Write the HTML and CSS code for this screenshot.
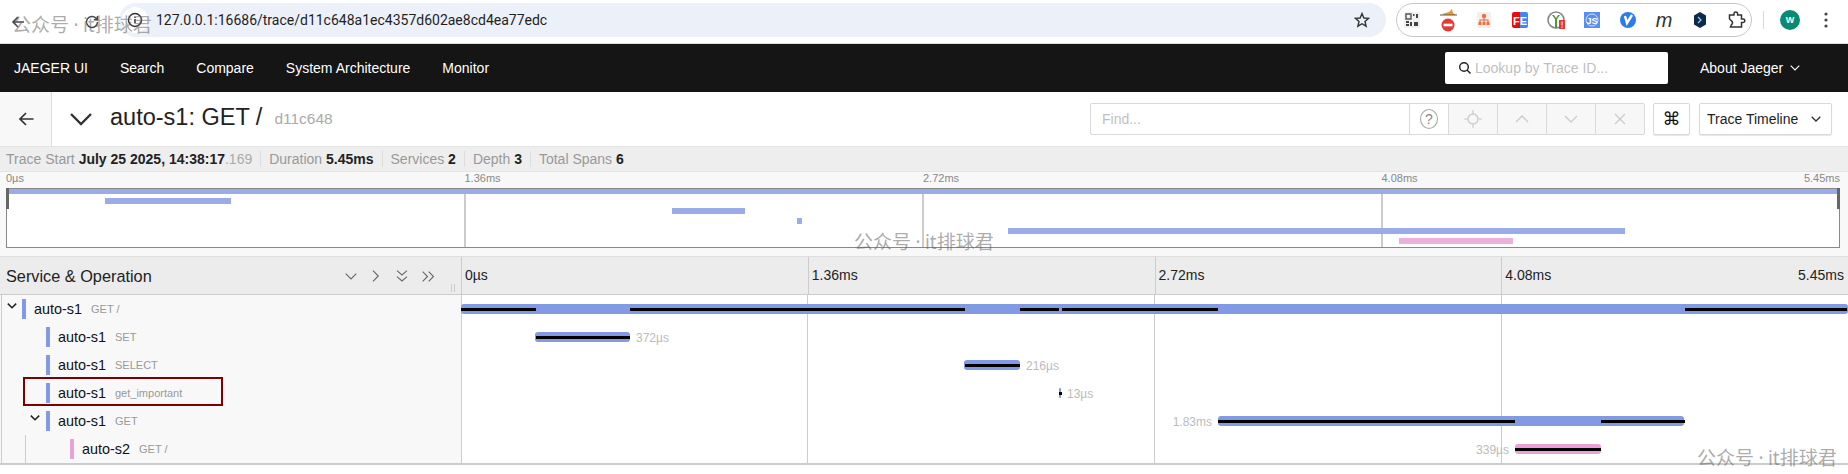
FILE: index.html
```html
<!DOCTYPE HTML>
<html>
<head>
	<meta charset="utf-8"/>
	<title>auto-s1: GET / - Jaeger UI</title>
	<link rel="stylesheet" href="styles.css">
</head>
<body>
	<div class="toolbar">
		<div class="tool-nav">
			<svg class="tool-back" width="16" height="16" viewBox="0 0 16 16"><path d="M14 8H3M8 3L3 8l5 5" fill="none" stroke="#474747" stroke-width="1.6"/></svg>
			<svg class="tool-reload" width="16" height="16" viewBox="0 0 16 16"><path d="M13.5 8a5.5 5.5 0 1 1-1.6-3.9L13.5 5.7M13.5 2v3.7H9.8" fill="none" stroke="#474747" stroke-width="1.5"/></svg>
		</div>
		<div class="omnibox">
			<span class="site-chip"><svg width="16" height="16" viewBox="0 0 16 16"><circle cx="8" cy="8" r="6.5" fill="none" stroke="#333" stroke-width="1.4"/><path d="M8 7v4.4M8 4.4v1.5" stroke="#333" stroke-width="1.5"/></svg></span>
			<span class="url">127.0.0.1:16686/trace/d11c648a1ec4357d602ae8cd4ea77edc</span>
			<svg class="star" width="16" height="16" viewBox="0 0 16 16"><path d="M8 1.6l1.9 4.4 4.7.4-3.6 3.1 1.1 4.7L8 11.7l-4.1 2.5L5 9.5 1.4 6.4l4.7-.4z" fill="none" stroke="#333" stroke-width="1.4"/></svg>
		</div>
		<div class="ext-pill">
			<svg class="ext" width="20" height="20" viewBox="0 0 20 20"><rect x="2" y="2" width="16" height="16" rx="2" fill="#f0f0f0"/><path d="M4 4h5v5H4z" fill="none" stroke="#555" stroke-width="1.4"/><path d="M11 4h1.500v2H11zM14 4h2v4h-2zM4 11h3v2H4zM8 12h2v4H8zM4 14h3v2H4zM12 12h4v4h-4z" fill="#444"/></svg>
			<svg class="ext" width="20" height="30" viewBox="0 0 20 30"><path d="M4 9l7-2 3-3 1 4 3 2H7z" fill="#e8972b"/><path d="M2 10h17" stroke="#555"/><circle cx="10" cy="20" r="6.500" fill="#e53935"/><rect x="5.500" y="18.700" width="9" height="2.600" fill="#fff"/></svg>
			<svg class="ext" width="20" height="20" viewBox="0 0 20 20"><rect x="3" y="2" width="14" height="16" rx="2" fill="#f5efec"/><circle cx="10" cy="6" r="2.200" fill="#ec6f45"/><path d="M6 12v-2h8v2M10 8v4" fill="none" stroke="#ec6f45" stroke-width="1.200"/><path d="M4.500 12h3v3h-3zM8.500 12h3v3h-3zM12.500 12h3v3h-3z" fill="#ec6f45"/></svg>
			<svg class="ext" width="20" height="20" viewBox="0 0 20 20"><path d="M4 2h6v16H4a2 2 0 0 1-2-2V4a2 2 0 0 1 2-2z" fill="#ee0a0a"/><path d="M10 2h6a2 2 0 0 1 2 2v12a2 2 0 0 1-2 2h-6z" fill="#4285f4"/><text class="ext-fe" x="10" y="14.5" text-anchor="middle">FE</text></svg>
			<svg class="ext" width="20" height="20" viewBox="0 0 20 20"><circle cx="10" cy="10" r="8" fill="#fff" stroke="#888" stroke-width="1.6"/><path d="M9 18V9L6 5h2l2 3 2-3h2l-3 4v9z" fill="#4a9a3c"/><rect x="13" y="10" width="6" height="9" fill="#e53935"/><path d="M16 11.5v4M16 16.5v1.2" stroke="#fff"/></svg>
			<svg class="ext" width="20" height="20" viewBox="0 0 20 20"><rect x="2" y="2" width="16" height="16" fill="#5b8def"/><circle cx="10" cy="10" r="6" fill="none" stroke="#cfe0fb"/><text class="ext-js" x="10" y="13.500" text-anchor="middle">JS</text></svg>
			<svg class="ext" width="20" height="20" viewBox="0 0 20 20"><circle cx="10" cy="10" r="8" fill="#2b7de9"/><path d="M7 6l2 7 5-8" fill="none" stroke="#fff" stroke-width="2.4"/></svg>
			<span class="ext ext-m">m</span>
			<svg class="ext" width="20" height="20" viewBox="0 0 20 20"><path d="M10 2l6 3.5v9L10 18l-6-3.500v-9z" fill="#0d2a4a"/><path d="M8 7l3 3-3 3" fill="none" stroke="#9fc3e8" stroke-width="1.3"/></svg>
			<svg class="ext" width="20" height="20" viewBox="0 0 20 20"><path d="M3.500 5H8V3.700a1.800 1.800 0 0 1 3.600 0V5h3.900v4H17a1.500 1.500 0 0 1 0 3.600h-1.500V17h-11l1-2.500a2 2 0 0 0 0-3.500L3.500 9z" fill="none" stroke="#333" stroke-width="1.500"/></svg>
		</div>
		<span class="tool-sep"></span>
		<span class="avatar">W</span>
		<svg class="dots" width="4" height="16" viewBox="0 0 4 16"><circle cx="2" cy="2" r="1.600" fill="#474747"/><circle cx="2" cy="8" r="1.600" fill="#474747"/><circle cx="2" cy="14" r="1.600" fill="#474747"/></svg>
	</div>

	<div class="topnav">
		<a class="nav-item">JAEGER UI</a>
		<a class="nav-item">Search</a>
		<a class="nav-item">Compare</a>
		<a class="nav-item">System Architecture</a>
		<a class="nav-item">Monitor</a>
		<div class="lookup">
			<svg width="14" height="14" viewBox="0 0 14 14"><circle cx="6" cy="6" r="4.300" fill="none" stroke="#222" stroke-width="1.400"/><path d="M9 9l3.500 3.500" stroke="#222" stroke-width="1.400"/></svg>
			<span>Lookup by Trace ID...</span>
		</div>
		<a class="about">About Jaeger<svg width="10" height="6" viewBox="0 0 10 6"><path d="M.7.7L5 5 9.300.7" fill="none" stroke="#fff" stroke-width="1.100"/></svg></a>
	</div>

	<div class="trace-head">
		<div class="back-col"><svg width="16" height="14" viewBox="0 0 16 14"><path d="M15.500 7H2M8 1L2 7l6 6" fill="none" stroke="#333" stroke-width="1.700"/></svg></div>
		<svg class="title-chev" width="22" height="13" viewBox="0 0 22 13"><path d="M1 1l10 10L21 1" fill="none" stroke="#333" stroke-width="2.400"/></svg>
		<h1 class="trace-title">auto-s1: GET /</h1>
		<span class="trace-id">d11c648</span>
		<div class="finder">
			<span class="find-input">Find...</span>
			<span class="find-cell help"><svg width="20" height="22" viewBox="0 0 20 22"><ellipse cx="10" cy="11" rx="8.500" ry="9.500" fill="none" stroke="#aaa" stroke-width="1.100"/><text class="help-q" x="10" y="16" text-anchor="middle">?</text></svg></span>
			<span class="find-cell off"><svg width="18" height="18" viewBox="0 0 18 18"><circle cx="9" cy="9" r="5" fill="none" stroke="#ccc" stroke-width="1.400"/><path d="M9 0v4M9 14v4M0 9h4M14 9h4" stroke="#ccc" stroke-width="1.200"/></svg></span>
			<span class="find-cell off"><svg width="14" height="8" viewBox="0 0 14 8"><path d="M1 7l6-6 6 6" fill="none" stroke="#ccc" stroke-width="1.400"/></svg></span>
			<span class="find-cell off"><svg width="14" height="8" viewBox="0 0 14 8"><path d="M1 1l6 6 6-6" fill="none" stroke="#ccc" stroke-width="1.400"/></svg></span>
			<span class="find-cell off"><svg width="12" height="12" viewBox="0 0 12 12"><path d="M1 1l10 10M11 1L1 11" stroke="#ccc" stroke-width="1.400"/></svg></span>
		</div>
		<span class="kbd-btn">⌘</span>
		<span class="view-select">Trace Timeline<svg width="10" height="6" viewBox="0 0 10 6"><path d="M.7.7L5 5 9.300.7" fill="none" stroke="#333" stroke-width="1.300"/></svg></span>
	</div>

	<div class="trace-info">
		<span class="info-item">Trace Start <b>July 25 2025, 14:38:17</b><i>.169</i></span>
		<span class="info-item">Duration <b>5.45ms</b></span>
		<span class="info-item">Services <b>2</b></span>
		<span class="info-item">Depth <b>3</b></span>
		<span class="info-item">Total Spans <b>6</b></span>
	</div>

	<div class="minimap">
		<div class="mini-ticks">
			<span>0µs</span><span>1.36ms</span><span>2.72ms</span><span>4.08ms</span><span class="last">5.45ms</span>
		</div>
		<div class="mini-canvas">
			<div class="mini-grid"><span></span><span></span><span></span><span></span></div>
			<div class="mini-bar root" style="top:0;left:0;width:1834px"></div>
			<div class="mini-bar" style="top:9px;left:99px;width:126px"></div>
			<div class="mini-bar" style="top:19px;left:666px;width:73px"></div>
			<div class="mini-bar" style="top:29px;left:791px;width:5px"></div>
			<div class="mini-bar" style="top:39px;left:1002px;width:617px"></div>
			<div class="mini-bar pink" style="top:49px;left:1393px;width:114px"></div>
			<div class="handle left"></div>
			<div class="handle right"></div>
		</div>
	</div>

	<div class="viewer">
		<div class="viewer-head">
			<div class="name-col head-name">
				<span class="head-title">Service &amp; Operation</span>
				<svg class="hico h1" width="12" height="7" viewBox="0 0 12 7"><path d="M.7.7L6 6 11.300.7" fill="none" stroke="#666" stroke-width="1.100"/></svg>
				<svg class="hico h2" width="8" height="12" viewBox="0 0 8 12"><path d="M1 .7L6.300 6 1 11.300" fill="none" stroke="#666" stroke-width="1.100"/></svg>
				<svg class="hico h3" width="12" height="12" viewBox="0 0 12 12"><path d="M1 .7L6 5 11 .7M1 6.700L6 11l5-4.300" fill="none" stroke="#666" stroke-width="1.100"/></svg>
				<svg class="hico h4" width="13" height="11" viewBox="0 0 13 11"><path d="M.7.7L5.500 5.500.7 10.300M6.700.7l4.800 4.800-4.800 4.800" fill="none" stroke="#666" stroke-width="1.100"/></svg>
				<span class="grip"></span>
			</div>
			<div class="time-col head-ticks">
				<span>0µs</span><span>1.36ms</span><span>2.72ms</span><span>4.08ms</span>
				<em>5.45ms</em>
			</div>
		</div>
		<div class="viewer-body">
			<div class="name-col tree">
				<div class="row">
					<span class="tog"><svg width="10" height="6" viewBox="0 0 10 6"><path d="M.8.600L5 4.800 9.200.600" fill="none" stroke="#222" stroke-width="1.500"/></svg></span>
					<span class="svc-bar"></span><span class="svc">auto-s1</span><span class="op">GET /</span>
				</div>
				<div class="row">
					<span class="guide"></span><span class="tog"></span>
					<span class="svc-bar"></span><span class="svc">auto-s1</span><span class="op">SET</span>
				</div>
				<div class="row">
					<span class="guide"></span><span class="tog"></span>
					<span class="svc-bar"></span><span class="svc">auto-s1</span><span class="op">SELECT</span>
				</div>
				<div class="row">
					<span class="guide"></span><span class="tog"></span>
					<span class="svc-bar"></span><span class="svc">auto-s1</span><span class="op">get_important</span>
				</div>
				<div class="row">
					<span class="guide"></span>
					<span class="tog"><svg width="10" height="6" viewBox="0 0 10 6"><path d="M.8.600L5 4.800 9.200.600" fill="none" stroke="#222" stroke-width="1.500"/></svg></span>
					<span class="svc-bar"></span><span class="svc">auto-s1</span><span class="op">GET</span>
				</div>
				<div class="row">
					<span class="guide"></span><span class="guide"></span><span class="tog"></span>
					<span class="svc-bar pink"></span><span class="svc">auto-s2</span><span class="op">GET /</span>
				</div>
				<div class="mark-box"></div>
			</div>
			<div class="time-col spans">
				<div class="time-grid"><span></span><span></span><span></span><span></span></div>
				<div class="span-row">
					<div class="span-bar" style="left:-1px;width:1387px"></div>
					<div class="self" style="left:-1px;width:75px"></div>
					<div class="self" style="left:168px;width:335px"></div>
					<div class="self" style="left:558px;width:39px"></div>
					<div class="self" style="left:600px;width:156px"></div>
					<div class="self" style="left:1223px;width:162px"></div>
				</div>
				<div class="span-row">
					<div class="span-bar" style="left:73px;width:95px"></div>
					<div class="self" style="left:74px;width:94px"></div>
					<span class="dur" style="left:174px">372µs</span>
				</div>
				<div class="span-row">
					<div class="span-bar" style="left:502px;width:56px"></div>
					<div class="self" style="left:503px;width:55px"></div>
					<span class="dur" style="left:564px">216µs</span>
				</div>
				<div class="span-row">
					<div class="span-bar" style="left:597px;width:2px"></div>
					<div class="self" style="left:597px;width:3px"></div>
					<span class="dur" style="left:605px">13µs</span>
				</div>
				<div class="span-row">
					<div class="span-bar" style="left:756px;width:466px"></div>
					<div class="self" style="left:756px;width:297px"></div>
					<div class="self" style="left:1139px;width:84px"></div>
					<span class="dur" style="right:636px">1.83ms</span>
				</div>
				<div class="span-row">
					<div class="span-bar pink" style="left:1053px;width:86px"></div>
					<div class="self" style="left:1053px;width:86px"></div>
					<span class="dur" style="right:339px">339µs</span>
				</div>
			</div>
		</div>
	</div>

	<div class="wm wm-top">公众号 · it排球君</div>
	<div class="wm wm-mid">公众号 · it排球君</div>
	<div class="wm wm-end">公众号 · it排球君</div>
</body>
</html>
```

FILE: styles.css
```css
html, body {
	margin: 0px;
	height: 100%;
	overflow: hidden;
	background-color: #fff;
}
body {
	font-family: "Liberation Sans", Arial, sans-serif;
	font-size: 14px;
	color: #222;
}
svg {
	display: block;
}

/* browser chrome */
.toolbar {
	display: flex;
	align-items: center;
	height: 43px;
	border-bottom: 1px solid #dadce0;
	box-sizing: content-box;
}
.tool-nav {
	display: flex;
	align-items: center;
	width: 119px;
	flex: none;
}
.tool-back {
	margin-left: 10px;
}
.tool-reload {
	margin-left: 58px;
}
.omnibox {
	display: flex;
	align-items: center;
	width: 1267px;
	height: 34px;
	margin-top: -3px;
	border-radius: 17px;
	background-color: #ecf0f9;
}
.site-chip {
	display: flex;
	align-items: center;
	justify-content: center;
	width: 26px;
	height: 26px;
	margin-left: 3px;
	border-radius: 50%;
	background-color: #fff;
}
.url {
	margin-left: 8px;
	font-family: Roboto, sans-serif;
	font-size: 14px;
	color: #1f1f1f;
	flex: 1;
}
.star {
	margin-right: 16px;
}
.ext-pill {
	display: flex;
	align-items: center;
	gap: 16px;
	width: 356px;
	height: 34px;
	margin-left: 10px;
	margin-top: -3px;
	padding-left: 5px;
	box-sizing: border-box;
	border: 1px solid #c7c7c7;
	border-radius: 17px;
}
.ext {
	flex: none;
	width: 20px;
}
.ext-fe {
	font-size: 11px;
	font-weight: bold;
	fill: #fff;
}
.ext-js {
	font-size: 9px;
	font-weight: bold;
	fill: #fff;
}
.ext-m {
	font-style: italic;
	font-size: 20px;
	line-height: 18px;
	text-align: center;
	color: #333;
}
.tool-sep {
	width: 1px;
	height: 18px;
	margin-left: 11px;
	margin-top: -3px;
	background-color: #c9daf3;
}
.avatar {
	width: 20px;
	height: 20px;
	margin-left: 16px;
	margin-top: -3px;
	border-radius: 50%;
	background-color: #0b8a73;
	color: #fff;
	font-size: 9px;
	font-weight: bold;
	line-height: 20px;
	text-align: center;
}
.dots {
	margin-left: 24px;
	margin-top: -3px;
}

/* jaeger nav */
.topnav {
	display: flex;
	align-items: center;
	height: 48px;
	background-color: #151515;
	color: #fff;
}
.nav-item {
	margin-left: 32px;
}
.nav-item:first-child {
	margin-left: 14px;
}
.lookup {
	display: flex;
	align-items: center;
	gap: 3px;
	width: 223px;
	height: 32px;
	margin-left: auto;
	padding-left: 13px;
	box-sizing: border-box;
	border-radius: 2px;
	background-color: #fff;
	color: #bfbfbf;
}
.about {
	display: flex;
	align-items: center;
	gap: 7px;
	width: 148px;
	margin-left: 32px;
}

/* trace header */
.trace-head {
	display: flex;
	align-items: center;
	height: 54px;
}
.back-col {
	display: flex;
	align-items: center;
	justify-content: center;
	align-self: stretch;
	width: 52px;
	box-sizing: border-box;
	border-right: 1px solid #ddd;
	background-color: #f8f8f8;
}
.title-chev {
	margin-left: 18px;
}
.trace-title {
	margin: -3px 0px 0px 18px;
	font-size: 23.5px;
	font-weight: normal;
	color: #222;
}
.trace-id {
	margin-left: 12px;
	font-size: 15.5px;
	color: #aaa;
}
.finder {
	display: flex;
	height: 32px;
	margin-left: auto;
	box-sizing: border-box;
	border: 1px solid #d9d9d9;
	border-radius: 2px;
}
.find-input {
	width: 318px;
	padding-left: 11px;
	box-sizing: border-box;
	line-height: 30px;
	color: #bfbfbf;
}
.find-cell {
	display: flex;
	align-items: center;
	justify-content: center;
	width: 49px;
	box-sizing: border-box;
	border-left: 1px solid #d9d9d9;
}
.find-cell.help {
	width: 39px;
}
.find-cell.off {
	background-color: #f7f7f7;
}
.help-q {
	font-size: 14px;
	fill: #888;
}
.kbd-btn {
	width: 37px;
	height: 32px;
	margin-left: 8px;
	box-sizing: border-box;
	border: 1px solid #d9d9d9;
	border-radius: 2px;
	box-shadow: 0px 1px 1px rgba(0, 0, 0, 0.1);
	font-family: "DejaVu Sans", sans-serif;
	font-size: 18px;
	line-height: 30px;
	text-align: center;
	color: #111;
}
.view-select {
	display: flex;
	align-items: center;
	justify-content: space-between;
	width: 133px;
	height: 32px;
	margin-left: 9px;
	margin-right: 16px;
	padding: 0px 10px 0px 7px;
	box-sizing: border-box;
	border: 1px solid #d9d9d9;
	border-radius: 2px;
	box-shadow: 0px 1px 1px rgba(0, 0, 0, 0.1);
}

/* info strip */
.trace-info {
	display: flex;
	align-items: center;
	height: 26px;
	padding-left: 6px;
	box-sizing: border-box;
	border-top: 1px solid #e4e4e4;
	border-bottom: 1px solid #e4e4e4;
	background-color: #eee;
	color: #999;
}
.info-item b {
	color: #222;
}
.info-item i {
	font-style: normal;
	color: #aaa;
}
.info-item + .info-item {
	margin-left: 8px;
	padding-left: 8px;
	border-left: 1px solid #ddd;
}

/* minimap */
.minimap {
	height: 84px;
	padding: 0px 8px 0px 6px;
	background-color: #f8f8f8;
}
.mini-ticks {
	display: grid;
	grid-template-columns: repeat(4, 1fr);
	position: relative;
	height: 16px;
	font-size: 11px;
	line-height: 13px;
	color: #888;
}
.mini-ticks .last {
	position: absolute;
	right: 0px;
}
.mini-canvas {
	position: relative;
	height: 60px;
	box-sizing: border-box;
	border: 1px solid #888;
	background-color: #fff;
}
.mini-grid {
	position: absolute;
	top: 0px;
	bottom: 0px;
	left: 0px;
	right: 0px;
	display: flex;
}
.mini-grid span {
	flex: 1;
	box-sizing: border-box;
	border-left: 2px solid #ccc;
}
.mini-grid span:first-child {
	border-left: none;
}
.mini-bar {
	position: absolute;
	height: 6px;
	margin-left: -1px;
	background-color: #9aabe8;
}
.mini-bar.root {
	height: 5px;
}
.mini-bar.pink {
	background-color: #ecb0dc;
}
.handle {
	position: absolute;
	top: -1px;
	width: 3px;
	height: 21px;
	background-color: #666;
}
.handle.left {
	left: -1px;
}
.handle.right {
	right: -1px;
}

/* span viewer */
.viewer {
	border-top: 1px solid #ddd;
	border-bottom: 2px solid #ccc;
}
.viewer-head {
	display: flex;
	height: 37px;
	box-sizing: content-box;
	border-bottom: 1px solid #ccc;
	background-color: #ececec;
}
.viewer-body {
	display: flex;
}
.name-col {
	position: relative;
	width: 462px;
	flex: none;
	box-sizing: border-box;
	border-right: 1px solid #ccc;
}
.time-col {
	position: relative;
	flex: 1;
}
.head-name {
	display: flex;
	align-items: center;
	padding-left: 6px;
}
.head-title {
	flex: 1;
	margin-top: 1px;
	font-size: 16.3px;
}
.hico {
	position: absolute;
}
.h1 { left: 345px; top: 16px; }
.h2 { left: 372px; top: 13px; }
.h3 { left: 396px; top: 13px; }
.h4 { left: 422px; top: 14px; }
.grip {
	position: absolute;
	left: 451px;
	top: 27px;
	width: 2px;
	height: 8px;
	border-left: 1px solid #ccc;
	border-right: 1px solid #ccc;
}
.head-ticks {
	display: flex;
	align-items: center;
	margin-left: -1px;
	line-height: 37px;
}
.head-ticks span {
	flex: 1;
	padding-left: 3px;
	box-sizing: border-box;
	border-left: 1px solid #ccc;
}
.head-ticks span:first-child {
	border-left-color: transparent;
}
.head-ticks em {
	position: absolute;
	right: 4px;
	font-style: normal;
}
.tree {
	background-color: #f8f8f8;
}
.row {
	display: flex;
	align-items: center;
	height: 28px;
	margin-left: 1px;
}
.guide {
	align-self: stretch;
	width: 24px;
	flex: none;
	box-sizing: border-box;
	border-left: 1px solid #ccc;
}
.tog {
	align-self: stretch;
	width: 21px;
	flex: none;
	box-sizing: border-box;
	padding: 8px 0px 0px 5px;
	border-left: 1px solid #ccc;
}
.row:nth-child(n+2) .guide + .tog {
	border-left: none;
	padding-left: 5px;
}
.svc-bar {
	width: 4px;
	height: 20px;
	flex: none;
	background-color: #8299e3;
}
.svc-bar.pink {
	background-color: #e8a2d6;
}
.svc {
	margin-left: 8px;
	margin-top: -1px;
	font-size: 14.4px;
	color: #111;
}
.op {
	margin-left: 9px;
	font-size: 11px;
	color: #999;
}
.mark-box {
	position: absolute;
	left: 23px;
	top: 82px;
	width: 200px;
	height: 29px;
	box-sizing: border-box;
	border: 2px solid #7c0000;
}
.time-grid {
	position: absolute;
	top: 0px;
	bottom: 0px;
	left: -1px;
	right: 0px;
	display: flex;
}
.time-grid span {
	flex: 1;
	box-sizing: border-box;
	border-left: 1px solid #ccc;
}
.time-grid span:first-child {
	border-left: none;
}
.span-row {
	position: relative;
	height: 28px;
}
.span-bar {
	position: absolute;
	top: 9px;
	height: 10px;
	border-radius: 3px;
	background-color: #8299e3;
}
.span-bar.pink {
	background-color: #e8a2d6;
}
.self {
	position: absolute;
	top: 13px;
	height: 3px;
	background-color: #000;
}
.dur {
	position: absolute;
	top: 8px;
	font-size: 12px;
	line-height: 14px;
	color: #bbb;
}

/* watermarks over the shot */
.wm {
	position: absolute;
	font-family: "Noto Sans", "Noto Sans CJK SC", sans-serif;
	font-size: 19px;
	line-height: 20px;
	word-spacing: -0.5px;
	white-space: nowrap;
	color: rgba(100, 100, 100, 0.55);
}
.wm-top { left: 12px; top: 15px; }
.wm-mid { left: 854px; top: 232px; }
.wm-end { left: 1697px; top: 448px; }
```
